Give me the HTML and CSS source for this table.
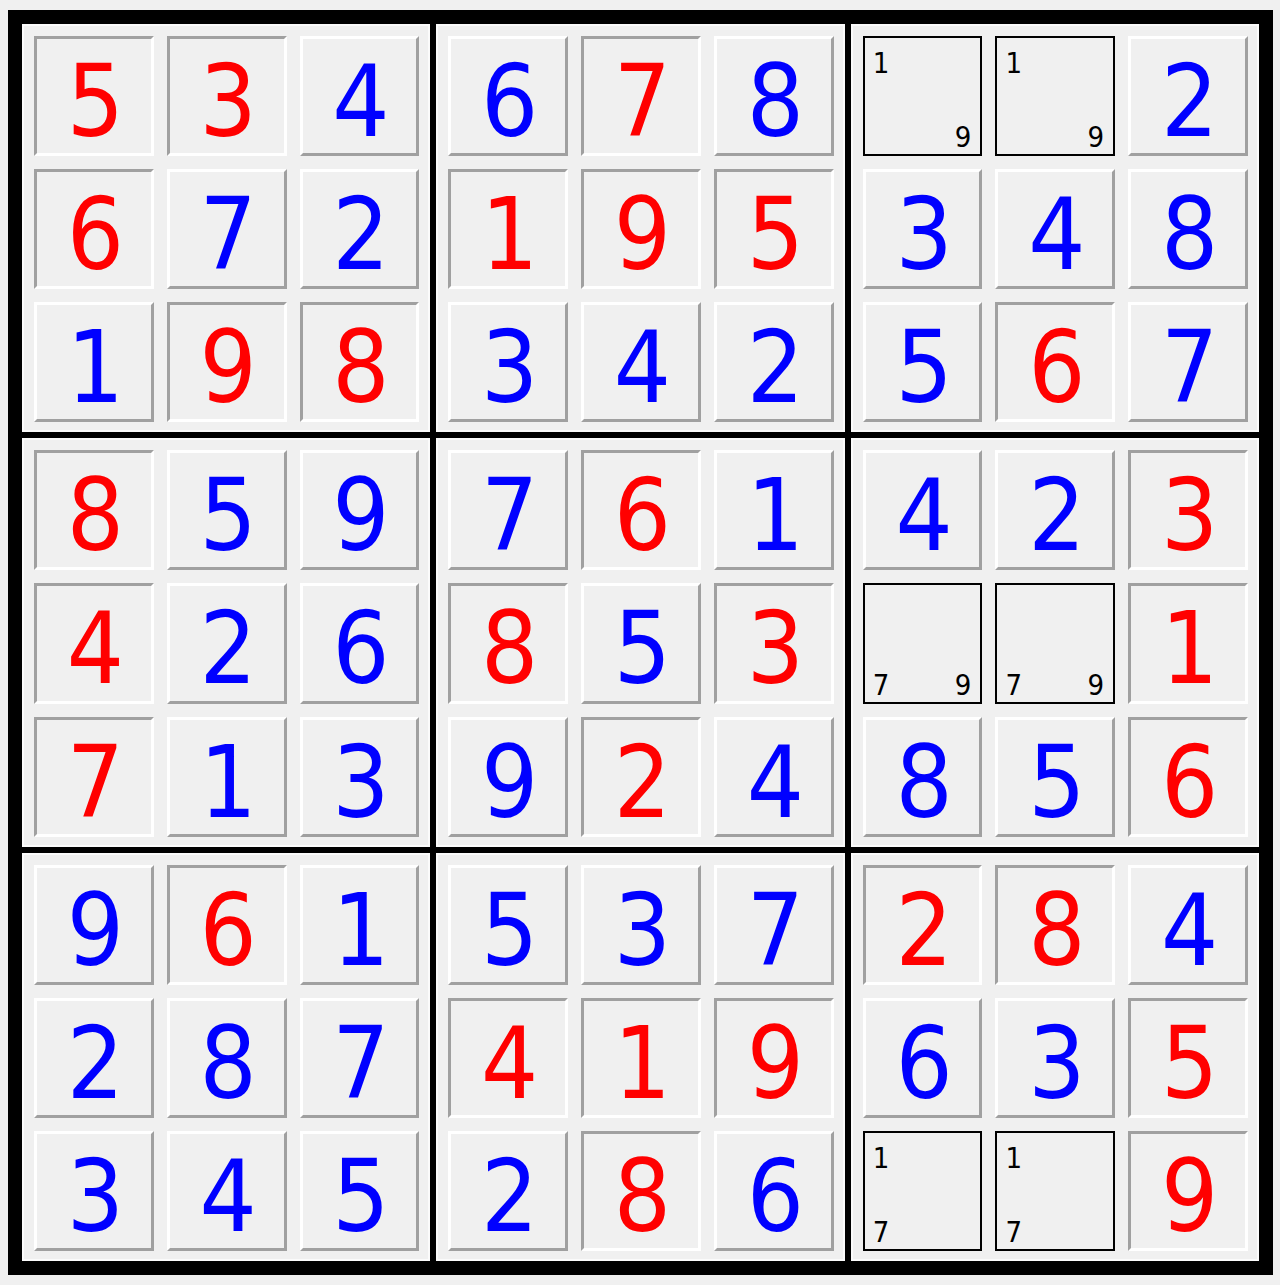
FILE: index.html
```html
<!DOCTYPE html>
<html>
<head>
<meta charset="utf-8">
<link rel="stylesheet" href="styles.css">
<title>Sudoku</title>
</head>
<body>
<div class="board">
  <div class="box">
    <div class="cell given">5</div><div class="cell given">3</div><div class="cell fill">4</div>
    <div class="cell given">6</div><div class="cell fill">7</div><div class="cell fill">2</div>
    <div class="cell fill">1</div><div class="cell given">9</div><div class="cell given">8</div>
  </div>
  <div class="box">
    <div class="cell fill">6</div><div class="cell given">7</div><div class="cell fill">8</div>
    <div class="cell given">1</div><div class="cell given">9</div><div class="cell given">5</div>
    <div class="cell fill">3</div><div class="cell fill">4</div><div class="cell fill">2</div>
  </div>
  <div class="box">
    <div class="cell pencil"><span class="p1">1</span><span class="p9">9</span></div><div class="cell pencil"><span class="p1">1</span><span class="p9">9</span></div><div class="cell fill">2</div>
    <div class="cell fill">3</div><div class="cell fill">4</div><div class="cell fill">8</div>
    <div class="cell fill">5</div><div class="cell given">6</div><div class="cell fill">7</div>
  </div>
  <div class="box">
    <div class="cell given">8</div><div class="cell fill">5</div><div class="cell fill">9</div>
    <div class="cell given">4</div><div class="cell fill">2</div><div class="cell fill">6</div>
    <div class="cell given">7</div><div class="cell fill">1</div><div class="cell fill">3</div>
  </div>
  <div class="box">
    <div class="cell fill">7</div><div class="cell given">6</div><div class="cell fill">1</div>
    <div class="cell given">8</div><div class="cell fill">5</div><div class="cell given">3</div>
    <div class="cell fill">9</div><div class="cell given">2</div><div class="cell fill">4</div>
  </div>
  <div class="box">
    <div class="cell fill">4</div><div class="cell fill">2</div><div class="cell given">3</div>
    <div class="cell pencil"><span class="p7">7</span><span class="p9">9</span></div><div class="cell pencil"><span class="p7">7</span><span class="p9">9</span></div><div class="cell given">1</div>
    <div class="cell fill">8</div><div class="cell fill">5</div><div class="cell given">6</div>
  </div>
  <div class="box">
    <div class="cell fill">9</div><div class="cell given">6</div><div class="cell fill">1</div>
    <div class="cell fill">2</div><div class="cell fill">8</div><div class="cell fill">7</div>
    <div class="cell fill">3</div><div class="cell fill">4</div><div class="cell fill">5</div>
  </div>
  <div class="box">
    <div class="cell fill">5</div><div class="cell fill">3</div><div class="cell fill">7</div>
    <div class="cell given">4</div><div class="cell given">1</div><div class="cell given">9</div>
    <div class="cell fill">2</div><div class="cell given">8</div><div class="cell fill">6</div>
  </div>
  <div class="box">
    <div class="cell given">2</div><div class="cell given">8</div><div class="cell fill">4</div>
    <div class="cell fill">6</div><div class="cell fill">3</div><div class="cell given">5</div>
    <div class="cell pencil"><span class="p1">1</span><span class="p7">7</span></div><div class="cell pencil"><span class="p1">1</span><span class="p7">7</span></div><div class="cell given">9</div>
  </div>
</div>
</body>
</html>
```
FILE: styles.css
```css
html, body {
  margin: 0;
  padding: 0;
  background: #f0f0f0;
}
body {
  padding: 10px 0 0 8px;
  font-family: "DejaVu Sans Condensed", "DejaVu Sans", Verdana, sans-serif;
}
.board {
  width: 1265px;
  height: 1265px;
  box-sizing: border-box;
  border: 14px solid #000;
  background: #000;
  display: grid;
  grid-template-columns: repeat(3, 1fr);
  grid-template-rows: repeat(3, 1fr);
  gap: 6px;
}
.box {
  background: #f0f0f0;
  border: 2px solid #fbfbfb;
  display: grid;
  grid-template-columns: repeat(3, 1fr);
  grid-template-rows: repeat(3, 1fr);
  gap: 13px;
  padding: 10px 9px 8px 10px;
  min-width: 0;
  min-height: 0;
}
.cell {
  box-sizing: border-box;
  background: #f0f0f0;
  border: 3px solid;
  display: flex;
  align-items: center;
  justify-content: center;
  font-size: 100px;
  line-height: 1;
  padding-top: 12px;
  padding-left: 3px;
  min-width: 0;
  min-height: 0;
}
.fill {
  color: #0000ff;
  border-color: #ffffff #a0a0a0 #a0a0a0 #ffffff;
}
.given {
  color: #ff0000;
  border-color: #a0a0a0 #ffffff #ffffff #a0a0a0;
}
.pencil {
  border: 2px solid #000;
  display: grid;
  grid-template-columns: repeat(3, 1fr);
  grid-template-rows: repeat(3, 1fr);
  padding: 11px 9px 2px 8px;
  font-family: "DejaVu Sans Condensed", "DejaVu Sans", Verdana, sans-serif;
  font-size: 29px;
  color: #000;
}
.pencil span {
  line-height: 1;
}
.p1 { grid-row: 1; grid-column: 1; justify-self: start; align-self: start; }
.p7 { grid-row: 3; grid-column: 1; justify-self: start; align-self: end; }
.p9 { grid-row: 3; grid-column: 3; justify-self: end; align-self: end; }
```
